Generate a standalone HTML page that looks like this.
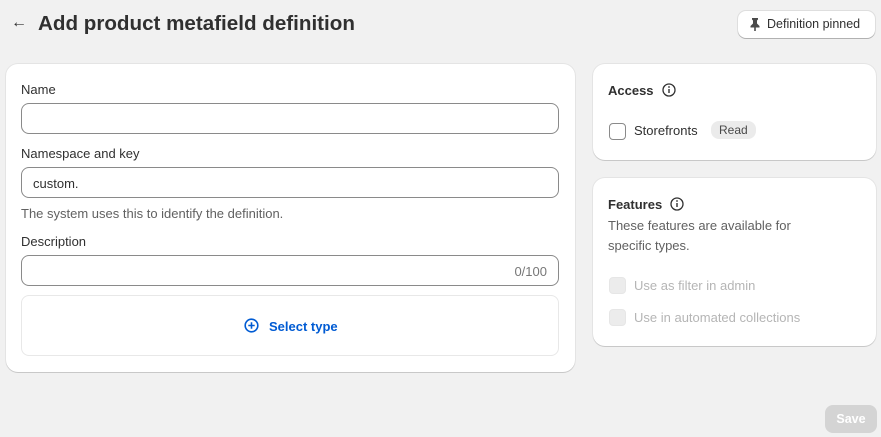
<!DOCTYPE html>
<html><head><style>
body{margin:0;width:881px;height:437px;background:#f1f1f1;font-family:"Liberation Sans",sans-serif;color:#303030;position:relative;overflow:hidden;font-size:13px}
.a{position:absolute}
.card{position:absolute;background:#fff;border-radius:12px;box-shadow:0 1px 0 rgba(0,0,0,.12),0 0 0 1px rgba(0,0,0,.05)}
.inp{position:absolute;left:15px;width:536px;border:1px solid #8a8a8a;border-radius:8px;background:#fff}
.lbl{position:absolute;left:15px;font-size:13px;color:#303030}
.cb{position:absolute;width:15px;height:15px;border:1px solid #8a8a8a;border-radius:4px;background:#fff}
.cbd{border-color:#e6e6e6;background:#ececec}
</style></head><body>
<div class="a" style="left:11px;top:14px;font-size:16px">←</div>
<div class="a" style="left:38px;top:12px;font-size:20.6px;font-weight:bold;color:#303030">Add product metafield definition</div>
<div class="a" style="left:738px;top:11px;width:137px;height:27px;background:#fff;border-radius:8px;box-shadow:0 1px 0 rgba(0,0,0,.2),0 0 0 1px rgba(0,0,0,.08)">
<svg class="a" style="left:11px;top:7px" width="12" height="13" viewBox="0 0 12 13"><path d="M3 0h6v1.5L8 2.5v3l2.5 2.5v1.5H6.8V13H5.2V9.5H1.5V8L4 5.5v-3L3 1.5z" fill="#4a4a4a"/></svg>
<div class="a" style="left:29px;top:6px;font-size:12.5px">Definition pinned</div></div>

<div class="card" style="left:6px;top:64px;width:569px;height:308px">
<div class="lbl" style="top:18px">Name</div>
<div class="inp" style="top:39px;height:29px"></div>
<div class="lbl" style="top:82px">Namespace and key</div>
<div class="inp" style="top:103px;height:29px"><span class="a" style="left:11px;top:8px">custom.</span></div>
<div class="lbl" style="top:142px;color:#616161">The system uses this to identify the definition.</div>
<div class="lbl" style="top:170px">Description</div>
<div class="inp" style="top:191px;height:29px"><span class="a" style="right:11px;top:8px;color:#777">0/100</span></div>
<div class="a" style="left:15px;top:231px;width:536px;height:59px;border:1px solid #e8e8e8;border-radius:8px">
<svg class="a" style="left:222px;top:22px" width="15" height="15" viewBox="0 0 15 15"><circle cx="7.5" cy="7.5" r="6.3" fill="none" stroke="#005bd3" stroke-width="1.6"/><path d="M7.5 4.3v6.4M4.3 7.5h6.4" stroke="#005bd3" stroke-width="1.6"/></svg>
<div class="a" style="left:247px;top:23px;color:#005bd3;font-weight:bold;font-size:13px">Select type</div></div>
</div>

<div class="card" style="left:593px;top:64px;width:283px;height:96px">
<div class="a" style="left:15px;top:19px;font-weight:bold;font-size:13px">Access</div>
<svg class="a" style="left:69px;top:19px" width="14" height="14" viewBox="0 0 14 14"><circle cx="7" cy="7" r="6" fill="none" stroke="#303030" stroke-width="1.3"/><path d="M7 6v4" stroke="#303030" stroke-width="1.4"/><circle cx="7" cy="4" r=".9" fill="#303030"/></svg>
<div class="cb" style="left:16px;top:59px"></div>
<div class="a" style="left:41px;top:59px">Storefronts</div>
<div class="a" style="left:118px;top:57px;background:#ebebeb;border-radius:8px;padding:2px 8px;font-size:12px;color:#4a4a4a">Read</div>
</div>

<div class="card" style="left:593px;top:178px;width:283px;height:168px">
<div class="a" style="left:15px;top:19px;font-weight:bold;font-size:13px">Features</div>
<svg class="a" style="left:77px;top:19px" width="14" height="14" viewBox="0 0 14 14"><circle cx="7" cy="7" r="6" fill="none" stroke="#303030" stroke-width="1.3"/><path d="M7 6v4" stroke="#303030" stroke-width="1.4"/><circle cx="7" cy="4" r=".9" fill="#303030"/></svg>
<div class="a" style="left:15px;top:38px;line-height:20px;color:#616161;width:205px">These features are available for specific types.</div>
<div class="cb cbd" style="left:16px;top:99px"></div>
<div class="a" style="left:41px;top:100px;color:#b5b5b5">Use as filter in admin</div>
<div class="cb cbd" style="left:16px;top:131px"></div>
<div class="a" style="left:41px;top:132px;color:#b5b5b5">Use in automated collections</div>
</div>

<div class="a" style="left:825px;top:405px;width:52px;height:28px;background:#d4d4d4;border-radius:8px;color:#fff;font-weight:bold;font-size:12.5px;text-align:center;line-height:28px">Save</div>
</body></html>
